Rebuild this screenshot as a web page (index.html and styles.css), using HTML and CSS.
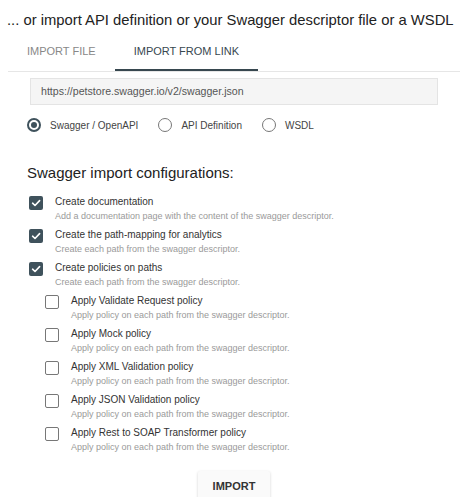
FILE: index.html
```html
<!DOCTYPE html>
<html>
<head>
<meta charset="utf-8">
<link rel="stylesheet" href="styles.css">
</head>
<body>
<div class="page">
  <h1 class="title">... or import API definition or your Swagger descriptor file or a WSDL</h1>
  <div class="tabs">
    <div class="tab">IMPORT FILE</div>
    <div class="tab active">IMPORT FROM LINK</div>
  </div>
  <div class="panel">
    <div class="url">https://petstore.swagger.io/v2/swagger.json</div>
    <div class="radios">
      <label class="radio checked"><span class="circle"></span><span>Swagger / OpenAPI</span></label>
      <label class="radio"><span class="circle"></span><span>API Definition</span></label>
      <label class="radio"><span class="circle"></span><span>WSDL</span></label>
    </div>
    <h2 class="heading">Swagger import configurations:</h2>
    <div class="options">
      <div class="opt">
        <span class="box checked"><svg viewBox="0 0 14 14" width="14" height="14"><path d="M3.6 7.2 L6 9.5 L10.6 4.6" fill="none" stroke="#fff" stroke-width="1.6" stroke-linecap="round" stroke-linejoin="round"/></svg></span>
        <div class="text"><div class="label">Create documentation</div><div class="desc">Add a documentation page with the content of the swagger descriptor.</div></div>
      </div>
      <div class="opt">
        <span class="box checked"><svg viewBox="0 0 14 14" width="14" height="14"><path d="M3.6 7.2 L6 9.5 L10.6 4.6" fill="none" stroke="#fff" stroke-width="1.6" stroke-linecap="round" stroke-linejoin="round"/></svg></span>
        <div class="text"><div class="label">Create the path-mapping for analytics</div><div class="desc">Create each path from the swagger descriptor.</div></div>
      </div>
      <div class="opt">
        <span class="box checked"><svg viewBox="0 0 14 14" width="14" height="14"><path d="M3.6 7.2 L6 9.5 L10.6 4.6" fill="none" stroke="#fff" stroke-width="1.6" stroke-linecap="round" stroke-linejoin="round"/></svg></span>
        <div class="text"><div class="label">Create policies on paths</div><div class="desc">Create each path from the swagger descriptor.</div></div>
      </div>
      <div class="sub">
        <div class="opt">
          <span class="box"></span>
          <div class="text"><div class="label">Apply Validate Request policy</div><div class="desc">Apply policy on each path from the swagger descriptor.</div></div>
        </div>
        <div class="opt">
          <span class="box"></span>
          <div class="text"><div class="label">Apply Mock policy</div><div class="desc">Apply policy on each path from the swagger descriptor.</div></div>
        </div>
        <div class="opt">
          <span class="box"></span>
          <div class="text"><div class="label">Apply XML Validation policy</div><div class="desc">Apply policy on each path from the swagger descriptor.</div></div>
        </div>
        <div class="opt">
          <span class="box"></span>
          <div class="text"><div class="label">Apply JSON Validation policy</div><div class="desc">Apply policy on each path from the swagger descriptor.</div></div>
        </div>
        <div class="opt">
          <span class="box"></span>
          <div class="text"><div class="label">Apply Rest to SOAP Transformer policy</div><div class="desc">Apply policy on each path from the swagger descriptor.</div></div>
        </div>
      </div>
    </div>
    <div class="actions"><button class="btn">IMPORT</button></div>
  </div>
</div>
</body>
</html>
```

FILE: styles.css
```css
html, body {
  margin: 0;
  padding: 0;
  background: #fff;
}
body {
  font-family: "Liberation Sans", Arial, sans-serif;
  color: #333;
}
.page {
  width: 452px;
  margin-left: 8px;
}
.title {
  margin: 0;
  padding: 11px 0 0 0;
  margin-left: -1px;
  font-size: 14.8px;
  font-weight: normal;
  line-height: 18px;
  height: 20px;
  color: #222;
  white-space: nowrap;
}
.tabs {
  display: flex;
  border-bottom: 1px solid #e6e6e6;
}
.tab {
  height: 40px;
  line-height: 40px;
  padding: 0 19px;
  font-size: 11px;
  color: #888;
  box-sizing: border-box;
}
.tab.active {
  color: #37474f;
  box-shadow: inset 0 -2px 0 #37474f;
}
.panel {
  padding: 0 0 0 19px;
}
.url {
  margin: 6px 22px 0 3px;
  height: 27px;
  box-sizing: border-box;
  background: #f5f5f5;
  border: 1px solid #e4e4e4;
  padding-left: 10px;
  font-size: 10.6px;
  line-height: 25px;
  color: #555;
}
.radios {
  display: flex;
  gap: 20px;
  margin-top: 10px;
  height: 20px;
  align-items: center;
}
.radio {
  display: flex;
  align-items: center;
  gap: 9px;
  font-size: 10px;
  color: #444;
}
.circle {
  width: 14px;
  height: 14px;
  box-sizing: border-box;
  border: 1.5px solid #777;
  border-radius: 50%;
  display: flex;
  align-items: center;
  justify-content: center;
}
.radio.checked .circle {
  border: 2px solid #3f525c;
}
.radio.checked .circle::after {
  content: "";
  width: 6px;
  height: 6px;
  border-radius: 50%;
  background: #3f525c;
}
.heading {
  margin: 29px 0 0 0;
  font-size: 15px;
  font-weight: normal;
  line-height: 18px;
  color: #222;
}
.options {
  margin-top: 13px;
  padding-left: 2px;
  display: flex;
  flex-direction: column;
  gap: 5px;
}
.sub {
  padding-left: 16px;
  display: flex;
  flex-direction: column;
  gap: 5px;
}
.opt {
  display: flex;
  gap: 12px;
  align-items: flex-start;
}
.box {
  width: 14px;
  height: 14px;
  margin-top: 1px;
  flex: none;
  box-sizing: border-box;
  border: 1.5px solid #777;
  border-radius: 2px;
  display: flex;
}
.box.checked {
  background: #3f525c;
  border: none;
}
.label {
  font-size: 10px;
  line-height: 14px;
  color: #333;
}
.desc {
  font-size: 9px;
  line-height: 14px;
  color: #9a9a9a;
}
.actions {
  display: flex;
  justify-content: center;
  margin-top: 17px;
  padding-right: 19px;
}
.btn {
  width: 72px;
  height: 30px;
  border: none;
  background: #fafafa;
  box-shadow: 0 1px 3px rgba(0,0,0,0.18);
  font-family: "Liberation Sans", Arial, sans-serif;
  font-size: 11px;
  font-weight: bold;
  color: #333;
  border-radius: 2px;
}
```
